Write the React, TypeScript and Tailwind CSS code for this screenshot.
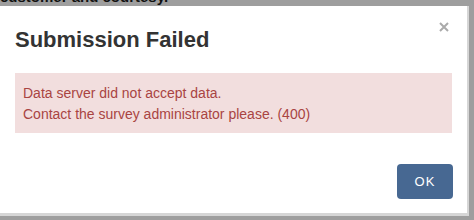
const App = () => {
  return (
    <div
      className="h-[220px] w-[474px] overflow-hidden bg-[#9e9e9e]"
      style={{ fontFamily: '"Liberation Sans", Arial, sans-serif' }}
    >
      {/* page text peeking above the dialog */}
      <div className="h-[6px] overflow-hidden">
        <div className="-mt-[11px] text-[15px] font-bold leading-[16px] text-[#111]">
          customer and courtesy.
        </div>
      </div>

      <div className="h-[210px] w-[469px] border-r-[2px] border-b-[3px] border-[#d6d6d6] bg-white">
        <div className="flex items-start justify-between pl-[15px] pr-[17px] pt-[12px]">
          <h4 className="mt-[10px] text-[22px] font-bold leading-[24px] text-[#333]">
            Submission Failed
          </h4>
          <button className="mt-[0px] flex h-[18px] w-[13px] items-center justify-center">
            <svg width="10" height="10" viewBox="0 0 10 10">
              <path d="M1 1 L9 9 M9 1 L1 9" stroke="#aaaaaa" strokeWidth="2" />
            </svg>
          </button>
        </div>

        <div className="mx-[15px] mt-[21px] bg-[#f2dede] pb-[8px] pl-[8px] pt-[10px] text-[14px] leading-[21px] text-[#a94442]">
          <div>Data server did not accept data.</div>
          <div>Contact the survey administrator please. (400)</div>
        </div>

        <div className="mt-[31px] flex justify-end pr-[14px]">
          <button className="h-[35px] w-[56px] rounded-[4px] bg-[#476892] text-[13px] tracking-[1px] text-white">
            OK
          </button>
        </div>
      </div>
    </div>
  )
}

export default App
